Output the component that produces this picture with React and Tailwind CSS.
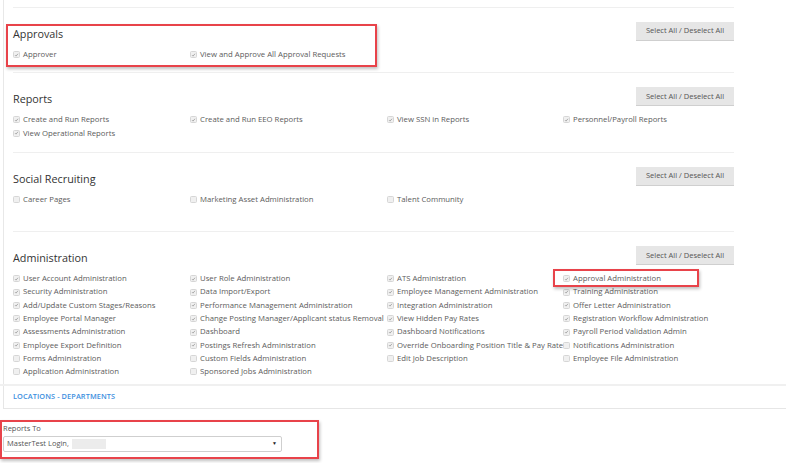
import React from "react";

const approvals = [
  ["Approver", true],
  ["View and Approve All Approval Requests", true],
];

const reports = [
  ["Create and Run Reports", true],
  ["Create and Run EEO Reports", true],
  ["View SSN in Reports", true],
  ["Personnel/Payroll Reports", true],
  ["View Operational Reports", true],
];

const social = [
  ["Career Pages", false],
  ["Marketing Asset Administration", false],
  ["Talent Community", false],
];

const admin = [
  ["User Account Administration", true],
  ["User Role Administration", true],
  ["ATS Administration", true],
  ["Approval Administration", true],
  ["Security Administration", true],
  ["Data Import/Export", true],
  ["Employee Management Administration", true],
  ["Training Administration", true],
  ["Add/Update Custom Stages/Reasons", true],
  ["Performance Management Administration", true],
  ["Integration Administration", true],
  ["Offer Letter Administration", true],
  ["Employee Portal Manager", true],
  ["Change Posting Manager/Applicant status Removal", true],
  ["View Hidden Pay Rates", true],
  ["Registration Workflow Administration", true],
  ["Assessments Administration", true],
  ["Dashboard", true],
  ["Dashboard Notifications", true],
  ["Payroll Period Validation Admin", true],
  ["Employee Export Definition", true],
  ["Postings Refresh Administration", true],
  ["Override Onboarding Position Title & Pay Rate", true],
  ["Notifications Administration", false],
  ["Forms Administration", false],
  ["Custom Fields Administration", false],
  ["Edit Job Description", false],
  ["Employee File Administration", false],
  ["Application Administration", false],
  ["Sponsored Jobs Administration", false],
];

export default function App() {
  return (
    <div
      className="relative h-[463px] w-[786px] overflow-hidden bg-white text-[#5c5c5c]"
      style={{ fontFamily: '"Open Sans", "Liberation Sans", sans-serif' }}
    >
      {/* Permissions panel */}
      <div className="ml-[3px] border-l border-[#e8e8e8] pl-[9px] pr-[52px] pt-[7px]">
        <Section title="Approvals" items={approvals} pb="pb-[11px]" />
        <Section title="Reports" items={reports} pb="pb-[12px]" />
        <Section title="Social Recruiting" items={social} pb="pb-[25px]" />
        <Section title="Administration" items={admin} pb="pb-[5px]" />
      </div>

      {/* Locations strip */}
      <div className="h-[2px] bg-[#f0f0f0]" />
      <div className="ml-[3px] flex h-[23px] items-center border-b border-l border-[#e6e6e6] pl-[9px]">
        <span className="text-[7.35px] font-semibold tracking-[0.1px] text-[#3d8fe0]">LOCATIONS - DEPARTMENTS</span>
      </div>

      {/* Reports to */}
      <div className="pl-[3px] pt-[14px]">
        <p className="text-[7.5px] leading-[10px] text-[#555]">Reports To</p>
        <div className="mt-[3px] flex h-[16px] w-[279px] items-center justify-between rounded-[2px] border border-[#cfcfcf] pl-[3px] pr-[4px]">
          <div className="flex items-center gap-[3px]">
            <span className="text-[7.5px] text-[#555]">MasterTest Login,</span>
            <span className="h-[10px] w-[34px] bg-[#ececec]" />
          </div>
          <span className="text-[5px] text-[#222]">▼</span>
        </div>
      </div>

      {/* Annotation boxes */}
      <div className="pointer-events-none absolute left-[6px] top-[24px] h-[43px] w-[371px] border-2 border-[#e8434a] shadow-[1px_2px_3px_rgba(0,0,0,0.25)]" />
      <div className="pointer-events-none absolute left-[553px] top-[269px] h-[18px] w-[146px] border-2 border-[#e8434a] shadow-[1px_2px_3px_rgba(0,0,0,0.25)]" />
      <div className="pointer-events-none absolute left-[0px] top-[420px] h-[39px] w-[319px] border-2 border-[#e8434a] shadow-[1px_2px_3px_rgba(0,0,0,0.25)]" />
    </div>
  );
}

function Section({ title, items, pb }) {
  return (
    <div className={`border-t border-[#efefef] pt-[14px] ${pb}`}>
      <div className="flex items-start justify-between">
        <h2 className="mt-[5px] text-[10.8px] leading-[14px] text-[#333]">{title}</h2>
        <button className="h-[19px] w-[98px] border-b border-[#cfcfcf] bg-[#e6e6e6] text-[7.5px] text-[#555]">
          Select All / Deselect All
        </button>
      </div>
      <div className="mt-[7px] grid grid-cols-[177px_197px_176px_1fr]">
        {items.map(([label, checked]) => (
          <CheckItem key={label} label={label} checked={checked} />
        ))}
      </div>
    </div>
  );
}

function CheckItem({ label, checked }) {
  return (
    <div className="flex h-[13.3px] items-center whitespace-nowrap">
      <span className="mr-[3px] flex h-[7px] w-[7px] shrink-0 items-center justify-center rounded-[1.5px] border border-[#d6d6d6] bg-[#f0f0f0]">
        {checked && (
          <svg viewBox="0 0 8 8" className="h-[6px] w-[6px]">
            <path d="M1.6 4.2 L3.2 5.8 L6.4 2" fill="none" stroke="#8a8a8a" strokeWidth="1.1" />
          </svg>
        )}
      </span>
      <span className="text-[7.75px] leading-[13.3px]">{label}</span>
    </div>
  );
}
